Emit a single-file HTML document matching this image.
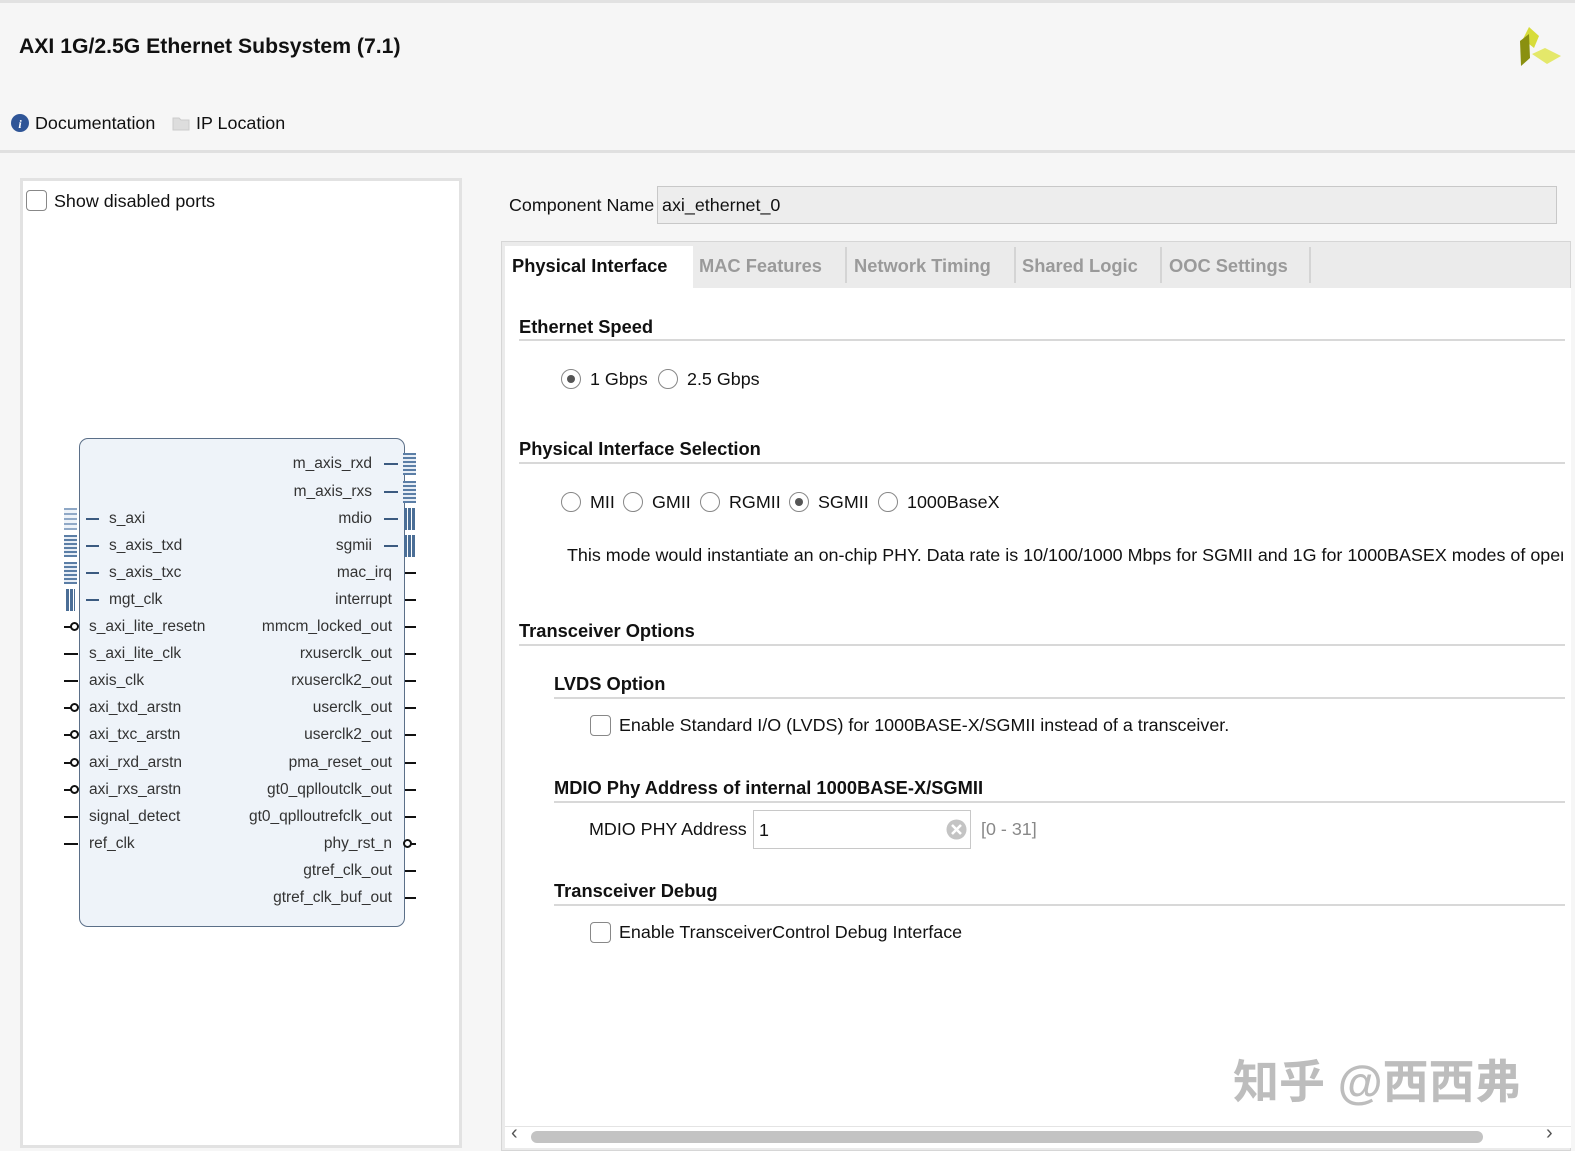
<!DOCTYPE html>
<html><head><meta charset="utf-8"><style>
*{margin:0;padding:0;box-sizing:border-box}
body{width:1575px;height:1144px;background:#f6f6f6;font-family:"Liberation Sans",Arial,sans-serif;position:relative;overflow:hidden;color:#111}
.a{position:absolute;white-space:nowrap}
.p{position:absolute;font-size:15.5px;color:#333;line-height:18px;transform:translateY(-9px)}
.r{text-align:right}
.h{position:absolute;height:2px;background:#d8d8d8}
.sec{position:absolute;font-weight:bold;font-size:18.3px}
.rad{position:absolute;width:20px;height:20px;border:1px solid #888;border-radius:50%;background:#fff}
.rad.on::after{content:"";position:absolute;left:5px;top:5px;width:8px;height:8px;border-radius:50%;background:#555}
.cb{position:absolute;width:21px;height:21px;border:1px solid #888;border-radius:4px;background:#fff}
.t{font-size:17.9px}
.ln{position:absolute;height:2px;background:#111}
.bl{position:absolute;height:2px;background:#3b5a80}
.bus{position:absolute;width:11px;height:22px;background:repeating-linear-gradient(90deg,#4b6e96 0 3px,transparent 3px 4px)}
.bus2{position:absolute;width:13px;height:22px;background:repeating-linear-gradient(0deg,#5b7ea6 0 2px,#e8eef6 2px 4px)}
.inv{position:absolute;width:9px;height:9px;border:2px solid #111;border-radius:50%;background:#fff}
.tab{position:absolute;top:255px;font-size:18.3px;font-weight:bold;color:#9a9a9a}
</style></head><body>
<div class="h" style="left:0;top:0;width:1575px;height:3px;background:#e2e2e2"></div>
<div class="a" style="left:19px;top:35px;font-size:21.2px;font-weight:bold">AXI 1G/2.5G Ethernet Subsystem (7.1)</div>
<svg class="a" style="left:1515px;top:24px" width="50" height="46"><polygon points="14,3 24,12 19,24 8,15" fill="#d7dc3a"/><polygon points="5,17 14,10 15,34 6,42" fill="#8a9010"/><polygon points="17,30 30,24 46,32 32,40" fill="#e4e86a"/></svg>
<svg class="a" style="left:11px;top:114px" width="18" height="18"><circle cx="9" cy="9" r="9" fill="#2f5597"/><text x="9" y="14" font-size="12" font-weight="bold" font-style="italic" fill="#fff" text-anchor="middle" font-family="Liberation Serif">i</text></svg>
<div class="a t" style="left:35px;top:113px">Documentation</div>
<svg class="a" style="left:172px;top:116px" width="18" height="15"><path d="M1 2h6l2 2h8v10H1z" fill="#ddd" stroke="#ccc"/></svg>
<div class="a t" style="left:196px;top:113px">IP Location</div>
<div class="h" style="left:0;top:150px;width:1575px;height:3px;background:#e0e0e0"></div>

<div class="a" style="left:20px;top:178px;width:442px;height:970px;background:#fff;border:3px solid #e2e2e2"></div>
<div class="cb" style="left:26px;top:190px"></div>
<div class="a t" style="left:54px;top:191px">Show disabled ports</div>

<div class="a" style="left:79px;top:438px;width:326px;height:489px;background:#eef3f9;border:1px solid #5b6f88;border-radius:9px"></div>
<div class="bus2" style="left:64px;top:508px;background:repeating-linear-gradient(0deg,#8fa8c6 0 2px,#eef3f9 2px 5px)"></div>
<div class="bus2" style="left:64px;top:535px"></div>
<div class="bus2" style="left:64px;top:562px"></div>
<div class="bus" style="left:66px;top:589px;width:9px"></div>
<div class="bl" style="left:86px;top:518px;width:13px"></div><div class="p" style="left:109px;top:519px">s_axi</div>
<div class="bl" style="left:86px;top:545px;width:13px"></div><div class="p" style="left:109px;top:546px">s_axis_txd</div>
<div class="bl" style="left:86px;top:572px;width:13px"></div><div class="p" style="left:109px;top:573px">s_axis_txc</div>
<div class="bl" style="left:86px;top:599px;width:13px"></div><div class="p" style="left:109px;top:600px">mgt_clk</div>
<div class="ln" style="left:64px;top:626px;width:8px"></div><div class="inv" style="left:70px;top:622px"></div><div class="p" style="left:89px;top:627px">s_axi_lite_resetn</div>
<div class="ln" style="left:64px;top:653px;width:14px"></div><div class="p" style="left:89px;top:654px">s_axi_lite_clk</div>
<div class="ln" style="left:64px;top:680px;width:14px"></div><div class="p" style="left:89px;top:681px">axis_clk</div>
<div class="ln" style="left:64px;top:707px;width:8px"></div><div class="inv" style="left:70px;top:703px"></div><div class="p" style="left:89px;top:708px">axi_txd_arstn</div>
<div class="ln" style="left:64px;top:734px;width:8px"></div><div class="inv" style="left:70px;top:730px"></div><div class="p" style="left:89px;top:735px">axi_txc_arstn</div>
<div class="ln" style="left:64px;top:762px;width:8px"></div><div class="inv" style="left:70px;top:758px"></div><div class="p" style="left:89px;top:763px">axi_rxd_arstn</div>
<div class="ln" style="left:64px;top:789px;width:8px"></div><div class="inv" style="left:70px;top:785px"></div><div class="p" style="left:89px;top:790px">axi_rxs_arstn</div>
<div class="ln" style="left:64px;top:816px;width:14px"></div><div class="p" style="left:89px;top:817px">signal_detect</div>
<div class="ln" style="left:64px;top:843px;width:14px"></div><div class="p" style="left:89px;top:844px">ref_clk</div>
<div class="p r" style="left:200px;width:172px;top:464px">m_axis_rxd</div><div class="bl" style="left:384px;top:463px;width:14px"></div><div class="bus2" style="left:403px;top:453px"></div>
<div class="p r" style="left:200px;width:172px;top:492px">m_axis_rxs</div><div class="bl" style="left:384px;top:491px;width:14px"></div><div class="bus2" style="left:403px;top:481px"></div>
<div class="p r" style="left:200px;width:172px;top:519px">mdio</div><div class="bl" style="left:384px;top:518px;width:14px"></div><div class="bus" style="left:404px;top:508px"></div>
<div class="p r" style="left:200px;width:172px;top:546px">sgmii</div><div class="bl" style="left:384px;top:545px;width:14px"></div><div class="bus" style="left:404px;top:535px"></div>
<div class="p r" style="left:150px;width:242px;top:573px">mac_irq</div><div class="ln" style="left:405px;top:572px;width:11px"></div>
<div class="p r" style="left:150px;width:242px;top:600px">interrupt</div><div class="ln" style="left:405px;top:599px;width:11px"></div>
<div class="p r" style="left:150px;width:242px;top:627px">mmcm_locked_out</div><div class="ln" style="left:405px;top:626px;width:11px"></div>
<div class="p r" style="left:150px;width:242px;top:654px">rxuserclk_out</div><div class="ln" style="left:405px;top:653px;width:11px"></div>
<div class="p r" style="left:150px;width:242px;top:681px">rxuserclk2_out</div><div class="ln" style="left:405px;top:680px;width:11px"></div>
<div class="p r" style="left:150px;width:242px;top:708px">userclk_out</div><div class="ln" style="left:405px;top:707px;width:11px"></div>
<div class="p r" style="left:150px;width:242px;top:735px">userclk2_out</div><div class="ln" style="left:405px;top:734px;width:11px"></div>
<div class="p r" style="left:150px;width:242px;top:763px">pma_reset_out</div><div class="ln" style="left:405px;top:762px;width:11px"></div>
<div class="p r" style="left:150px;width:242px;top:790px">gt0_qplloutclk_out</div><div class="ln" style="left:405px;top:789px;width:11px"></div>
<div class="p r" style="left:150px;width:242px;top:817px">gt0_qplloutrefclk_out</div><div class="ln" style="left:405px;top:816px;width:11px"></div>
<div class="p r" style="left:150px;width:242px;top:844px">phy_rst_n</div><div class="inv" style="left:403px;top:839px"></div><div class="ln" style="left:410px;top:843px;width:6px"></div>
<div class="p r" style="left:150px;width:242px;top:871px">gtref_clk_out</div><div class="ln" style="left:405px;top:870px;width:11px"></div>
<div class="p r" style="left:150px;width:242px;top:898px">gtref_clk_buf_out</div><div class="ln" style="left:405px;top:897px;width:11px"></div>

<div class="a t" style="left:509px;top:195px">Component Name</div>
<div class="a" style="left:657px;top:186px;width:900px;height:38px;background:#ededed;border:1px solid #c8c8c8;font-size:17.9px;padding:8px 0 0 4px">axi_ethernet_0</div>
<div class="a" style="left:501px;top:241px;width:1070px;height:910px;background:#ebebeb;border:1px solid #d6d6d6"></div>
<div class="a" style="left:505px;top:288px;width:1066px;height:860px;background:#fff"></div>
<div class="a" style="left:505px;top:246px;width:188px;height:44px;background:#fff"></div>
<div class="tab" style="left:512px;color:#111">Physical Interface</div>
<div class="tab" style="left:699px">MAC Features</div>
<div class="a" style="left:845px;top:247px;width:2px;height:36px;background:#d4d4d4"></div>
<div class="tab" style="left:854px">Network Timing</div>
<div class="a" style="left:1014px;top:247px;width:2px;height:36px;background:#d4d4d4"></div>
<div class="tab" style="left:1022px">Shared Logic</div>
<div class="a" style="left:1160px;top:247px;width:2px;height:36px;background:#d4d4d4"></div>
<div class="tab" style="left:1169px">OOC Settings</div>
<div class="a" style="left:1309px;top:247px;width:2px;height:36px;background:#d4d4d4"></div>

<div class="sec" style="left:519px;top:316px">Ethernet Speed</div>
<div class="h" style="left:519px;top:339px;width:1046px"></div>
<div class="rad on" style="left:561px;top:369px"></div><div class="a t" style="left:590px;top:369px">1 Gbps</div>
<div class="rad" style="left:658px;top:369px"></div><div class="a t" style="left:687px;top:369px">2.5 Gbps</div>

<div class="sec" style="left:519px;top:438px">Physical Interface Selection</div>
<div class="h" style="left:519px;top:462px;width:1046px"></div>
<div class="rad" style="left:561px;top:492px"></div><div class="a t" style="left:590px;top:492px">MII</div>
<div class="rad" style="left:623px;top:492px"></div><div class="a t" style="left:652px;top:492px">GMII</div>
<div class="rad" style="left:700px;top:492px"></div><div class="a t" style="left:729px;top:492px">RGMII</div>
<div class="rad on" style="left:789px;top:492px"></div><div class="a t" style="left:818px;top:492px">SGMII</div>
<div class="rad" style="left:878px;top:492px"></div><div class="a t" style="left:907px;top:492px">1000BaseX</div>
<div class="a t" style="left:567px;top:545px;width:996px;overflow:hidden">This mode would instantiate an on-chip PHY. Data rate is 10/100/1000 Mbps for SGMII and 1G for 1000BASEX modes of operation</div>

<div class="sec" style="left:519px;top:620px">Transceiver Options</div>
<div class="h" style="left:519px;top:644px;width:1046px"></div>
<div class="sec" style="left:554px;top:673px">LVDS Option</div>
<div class="h" style="left:554px;top:697px;width:1011px"></div>
<div class="cb" style="left:590px;top:715px"></div>
<div class="a t" style="left:619px;top:715px">Enable Standard I/O (LVDS) for 1000BASE-X/SGMII instead of a transceiver.</div>
<div class="sec" style="left:554px;top:777px">MDIO Phy Address of internal 1000BASE-X/SGMII</div>
<div class="h" style="left:554px;top:801px;width:1011px"></div>
<div class="a t" style="left:589px;top:819px">MDIO PHY Address</div>
<div class="a" style="left:753px;top:810px;width:218px;height:39px;border:1px solid #c8c8c8;background:#fff;font-size:17.9px;padding:9px 0 0 5px">1</div>
<svg class="a" style="left:946px;top:819px" width="21" height="21"><circle cx="10.5" cy="10.5" r="10" fill="#c4c4c4"/><path d="M6 6l9 9M15 6l-9 9" stroke="#fff" stroke-width="2.5"/></svg>
<div class="a t" style="left:981px;top:819px;color:#888">[0 - 31]</div>
<div class="sec" style="left:554px;top:880px">Transceiver Debug</div>
<div class="h" style="left:554px;top:904px;width:1011px"></div>
<div class="cb" style="left:590px;top:922px"></div>
<div class="a t" style="left:619px;top:922px">Enable TransceiverControl Debug Interface</div>

<div class="a" style="left:1233px;top:1046px;font-size:46px;color:#bdbdbd;font-weight:bold;font-family:'Liberation Sans','Noto Sans CJK SC',sans-serif">知乎 @西西弗</div>
<div class="a" style="left:505px;top:1126px;width:1066px;height:20px;background:#fff;border-top:1px solid #e4e4e4"></div>
<div class="a" style="left:531px;top:1131px;width:952px;height:12px;border-radius:6px;background:#c3c3c3"></div>
<div class="a" style="left:511px;top:1122px;font-size:20px;color:#555">‹</div>
<div class="a" style="left:1546px;top:1122px;font-size:20px;color:#555">›</div>
</body></html>
